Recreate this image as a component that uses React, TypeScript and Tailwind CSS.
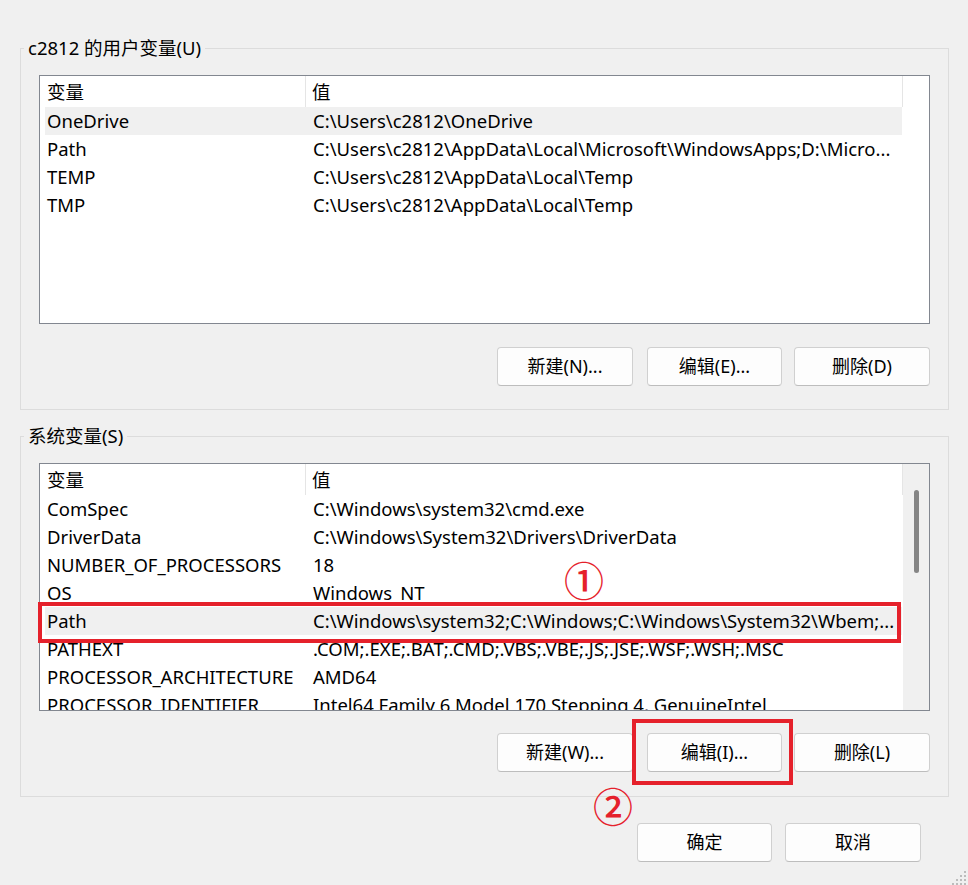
import React from 'react';

const userVars = [
    ['OneDrive', 'C:\\Users\\c2812\\OneDrive'],
    ['Path', 'C:\\Users\\c2812\\AppData\\Local\\Microsoft\\WindowsApps;D:\\Micro...'],
    ['TEMP', 'C:\\Users\\c2812\\AppData\\Local\\Temp'],
    ['TMP', 'C:\\Users\\c2812\\AppData\\Local\\Temp'],
];

const sysVars = [
    ['ComSpec', 'C:\\Windows\\system32\\cmd.exe'],
    ['DriverData', 'C:\\Windows\\System32\\Drivers\\DriverData'],
    ['NUMBER_OF_PROCESSORS', '18'],
    ['OS', 'Windows_NT'],
    ['Path', 'C:\\Windows\\system32;C:\\Windows;C:\\Windows\\System32\\Wbem;...'],
    ['PATHEXT', '.COM;.EXE;.BAT;.CMD;.VBS;.VBE;.JS;.JSE;.WSF;.WSH;.MSC'],
    ['PROCESSOR_ARCHITECTURE', 'AMD64'],
    ['PROCESSOR_IDENTIFIER', 'Intel64 Family 6 Model 170 Stepping 4, GenuineIntel'],
];

function Button({ label, w = 'w-[136px]' }: { label: string; w?: string }) {
    return (
        <button
            className={`${w} h-[39px] rounded-[4px] border border-[#d0d0d0] border-b-[#bdbdbd] bg-[#fdfdfd] text-[18px] text-black flex items-center justify-center`}
        >
            {label}
        </button>
    );
}

function VarList({
    rows,
    selected,
    scrollbar,
    height,
}: {
    rows: string[][];
    selected: number;
    scrollbar?: boolean;
    height: string;
}) {
    return (
        <div className={`${height} w-[891px] border border-[#828790] bg-white flex overflow-hidden`}>
            <div className="w-[863px] shrink-0">
                {/* Header */}
                <div className="h-[31px] flex items-center border-r border-[#e5e5e5]">
                    <div className="w-[266px] h-full pl-[7px] flex items-center border-r border-[#e5e5e5]">变量</div>
                    <div className="pl-[6px]">值</div>
                </div>
                {/* Rows */}
                <div className="pl-[5px]">
                    {rows.map(([name, value], i) => (
                        <div
                            key={name}
                            className={`h-[28px] w-[857px] flex items-center whitespace-nowrap overflow-hidden ${
                                i === selected ? 'bg-[#f0f0f0]' : ''
                            }`}
                        >
                            <span className="w-[268px] shrink-0 pl-[2px]">{name}</span>
                            <span>{value}</span>
                        </div>
                    ))}
                </div>
            </div>
            {scrollbar && (
                <div className="w-[26px] bg-[#f0f0f0] flex justify-center pt-[26px] pl-[1px]">
                    <div className="w-[5px] h-[83px] rounded-full bg-[#858585]" />
                </div>
            )}
        </div>
    );
}

export default function App() {
    return (
        <div className="relative w-[968px] h-[885px] overflow-hidden bg-[#f0f0f0] text-[18.5px] text-black font-['Noto_Sans','Noto_Sans_CJK_SC',sans-serif] pt-[36px] pl-[20px]">
            {/* User variables */}
            <fieldset className="w-[929px] border border-[#dcdcdc] p-0">
                <legend className="ml-[3px] px-[4px] leading-[24px]">c2812 的用户变量(U)</legend>
                <div className="px-[18px] pt-[15px] pb-[23px]">
                    <VarList rows={userVars} selected={0} height="h-[249px]" />
                    <div className="flex justify-end w-[891px] mt-[23px]">
                        <Button label="新建(N)..." />
                        <div className="ml-[14px]"><Button label="编辑(E)..." w="w-[135px]" /></div>
                        <div className="ml-[12px]"><Button label="删除(D)" /></div>
                    </div>
                </div>
            </fieldset>

            {/* System variables */}
            <fieldset className="w-[929px] border border-[#dcdcdc] p-0 mt-[14px]">
                <legend className="ml-[3px] px-[4px] leading-[24px]">系统变量(S)</legend>
                <div className="px-[18px] pt-[15px] pb-[24px]">
                    <VarList rows={sysVars} selected={4} scrollbar height="h-[248px]" />
                    <div className="flex justify-end w-[891px] mt-[22px]">
                        <Button label="新建(W)..." />
                        <div className="ml-[14px]"><Button label="编辑(I)..." w="w-[135px]" /></div>
                        <div className="ml-[12px]"><Button label="删除(L)" /></div>
                    </div>
                </div>
            </fieldset>

            {/* Dialog buttons */}
            <div className="flex justify-end pr-[47px] mt-[26px] gap-[13px]">
                <Button label="确定" w="w-[135px]" />
                <Button label="取消" w="w-[136px]" />
            </div>

            {/* Annotations */}
            <div className="absolute left-[38px] top-[602px] w-[863px] h-[41px] border-[4px] border-[#e5212b]" />
            <div className="absolute left-[561px] top-[556px] w-[46px] h-[46px] flex items-center justify-center text-[40px] leading-none font-medium text-[#e5212b] font-['Noto_Sans_CJK_SC',sans-serif]">
                ①
            </div>
            <div className="absolute left-[767px] top-[719px] hidden" />
            <div className="absolute left-[632px] top-[719px] w-[161px] h-[66px] border-[4px] border-[#e5212b]" />
            <div className="absolute left-[590px] top-[782px] w-[46px] h-[46px] flex items-center justify-center text-[40px] leading-none font-medium text-[#e5212b] font-['Noto_Sans_CJK_SC',sans-serif]">
                ②
            </div>

            {/* Resize grip */}
            <svg className="absolute right-0 bottom-0" width="16" height="14" viewBox="0 0 16 14">
                <g fill="#bcbcbc">
                    <rect x="12" y="0" width="2" height="2" />
                    <rect x="8" y="4" width="2" height="2" />
                    <rect x="12" y="4" width="2" height="2" />
                    <rect x="4" y="8" width="2" height="2" />
                    <rect x="8" y="8" width="2" height="2" />
                    <rect x="12" y="8" width="2" height="2" />
                    <rect x="0" y="12" width="2" height="2" />
                    <rect x="4" y="12" width="2" height="2" />
                    <rect x="8" y="12" width="2" height="2" />
                    <rect x="12" y="12" width="2" height="2" />
                </g>
            </svg>
        </div>
    );
}
